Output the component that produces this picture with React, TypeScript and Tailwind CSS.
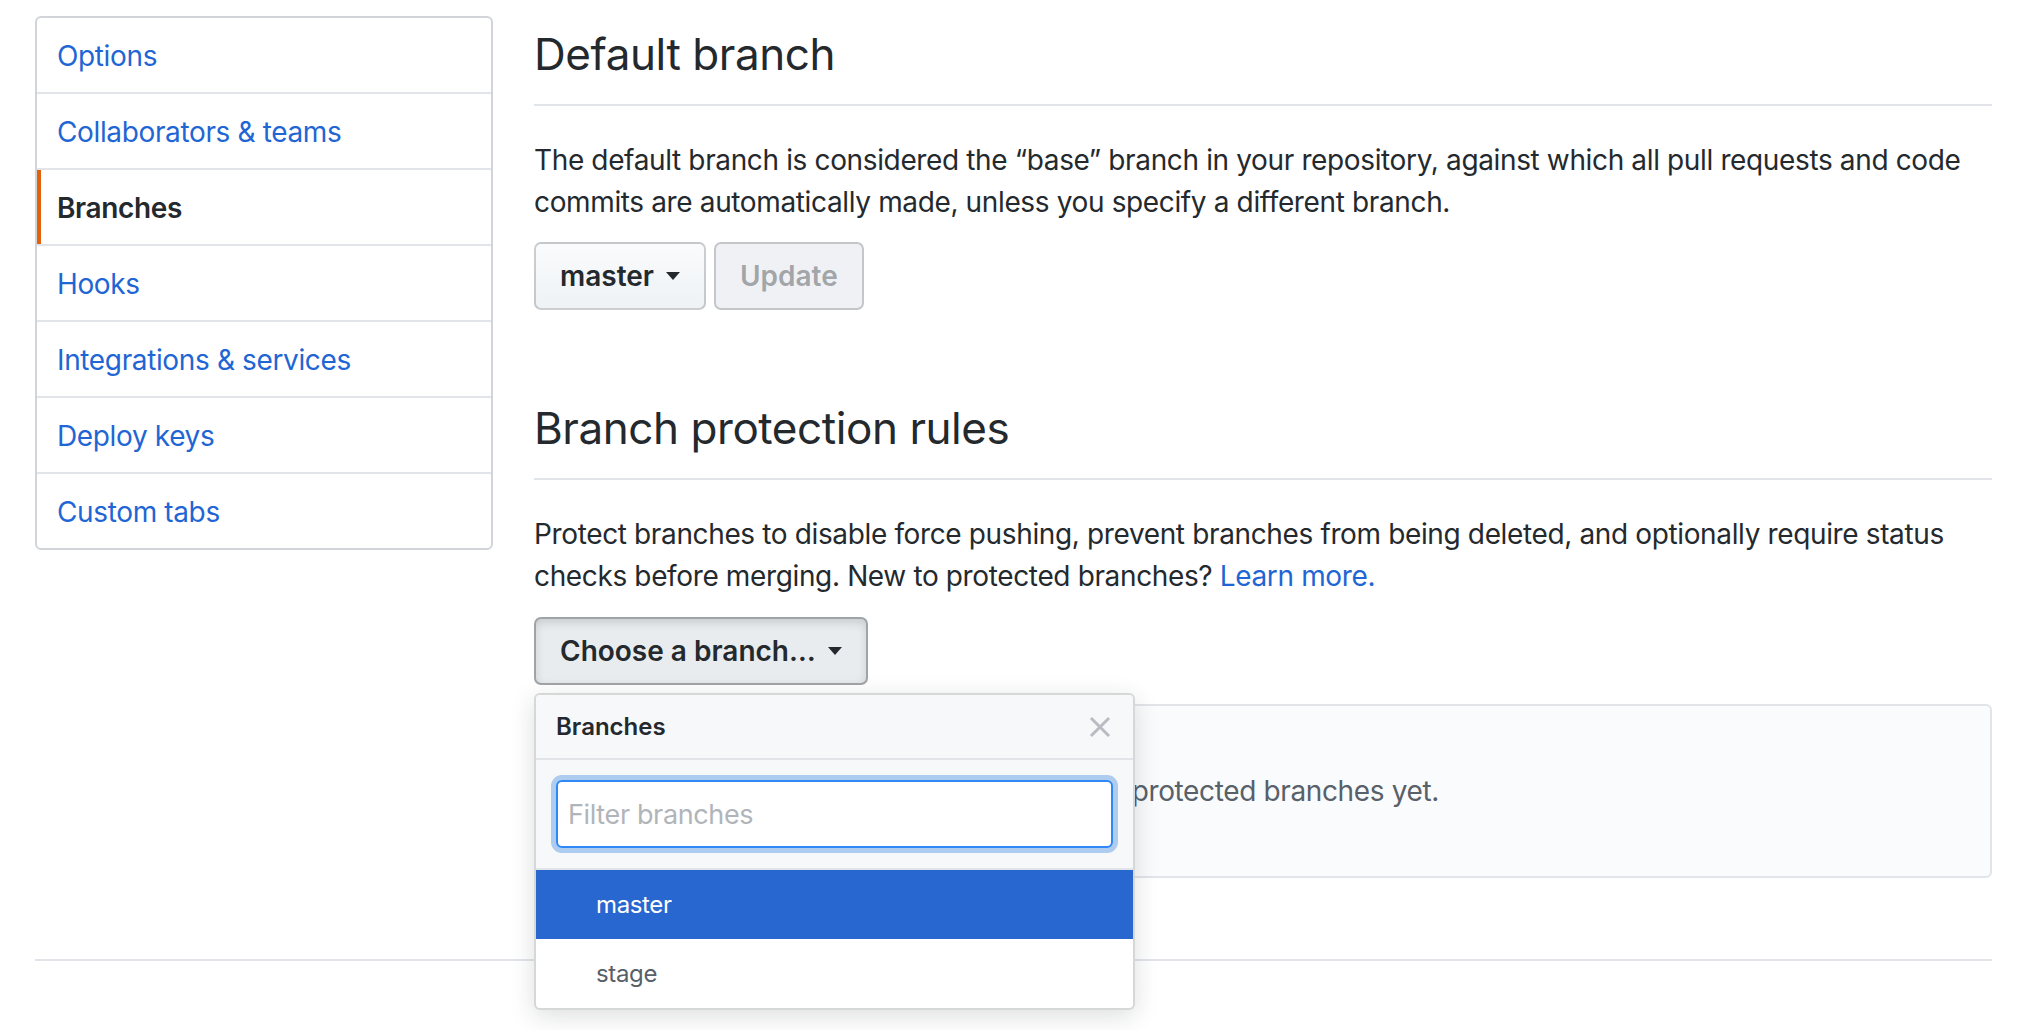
import React from "react";

const items = [
  "Options",
  "Collaborators & teams",
  "Branches",
  "Hooks",
  "Integrations & services",
  "Deploy keys",
  "Custom tabs",
];

function Caret({ color = "#24292e" }: { color?: string }) {
  return (
    <span
      className="inline-block w-0 h-0 border-x-[7px] border-x-transparent border-t-[8px] align-middle"
      style={{ borderTopColor: color }}
    />
  );
}

export default function App() {
  return (
    <div className="w-[2040px] min-h-[1030px] bg-white pt-4 pl-[35px] font-['Inter','Liberation_Sans',sans-serif] text-[28px] leading-[42px] text-[#24292e] tracking-[-0.013em]">
      <div className="flex items-start gap-[41px]">
        <nav className="w-[458px] border-2 border-[#d1d5da] rounded-[6px] overflow-hidden">
          {items.map((it, i) => {
            const sel = it === "Branches";
            return (
              <div
                key={it}
                className={
                  "relative px-5 pt-[17px] pb-[15px] " +
                  (i > 0 ? "border-t-2 border-[#e1e4e8] " : "") +
                  (sel ? "font-semibold text-[#24292e]" : "text-[#1f66d4]")
                }
              >
                {sel && <span className="absolute left-0 top-0 bottom-0 w-1 bg-[#e36209]" />}
                {it}
              </div>
            );
          })}
        </nav>

        <main className="w-[1458px]">
          <div className="border-b-2 border-[#e1e4e8] pb-[14px] mb-[33px]">
            <h2 className="pt-[2px] text-[44px] leading-[72px] font-normal tracking-[-0.01em]">Default branch</h2>
          </div>
          <p className="mb-[19px]">
            The default branch is considered the “base” branch in your repository, against which all pull
            requests and code commits are automatically made, unless you specify a different branch.
          </p>
          <div className="flex gap-2">
            <button className="h-[68px] px-6 flex items-center gap-3 font-semibold tracking-normal border-2 border-[rgba(27,31,35,0.2)] rounded-[7px] bg-[linear-gradient(-180deg,#fafbfc_0%,#eff3f6_90%)] text-[#24292e]">
              master
              <Caret />
            </button>
            <button className="h-[68px] px-[24px] flex items-center font-semibold tracking-normal border-2 border-[rgba(27,31,35,0.2)] rounded-[7px] bg-[#eff1f4] text-[rgba(36,41,46,0.4)]">
              Update
            </button>
          </div>

          <div className="mt-20 border-b-2 border-[#e1e4e8] pb-[14px] mb-[33px]">
            <h2 className="pt-[2px] text-[44px] leading-[72px] font-normal tracking-[-0.01em]">Branch protection rules</h2>
          </div>
          <p className="mb-5">
            Protect branches to disable force pushing, prevent branches from being deleted, and optionally
            require status checks before merging. New to protected branches?{" "}
            <a className="text-[#1f66d4]">Learn more.</a>
          </p>

          <div className="relative">
            <button className="h-[68px] px-6 flex items-center gap-3 font-semibold tracking-normal border-2 border-[rgba(27,31,35,0.35)] rounded-[7px] bg-[#e9ecef] shadow-[inset_0_4px_8px_rgba(27,31,35,0.15)] text-[#24292e]">
              Choose a branch…
              <Caret />
            </button>

            <div className="absolute left-0 top-[76px] z-10 w-[601px] bg-white border-2 border-[rgba(27,31,35,0.18)] rounded-[6px] shadow-[0_6px_24px_rgba(27,31,35,0.15)] overflow-hidden">
              <div className="h-[65px] px-5 flex items-center justify-between bg-[#f6f8fa] border-b-2 border-[#e1e4e8]">
                <span className="text-[24px] font-semibold tracking-normal text-[#24292e]">Branches</span>
                <svg width="22" height="22" viewBox="0 0 22 22" className="mr-[2px]">
                  <path d="M3 3 L19 19 M19 3 L3 19" stroke="#b9bdc3" strokeWidth="3" strokeLinecap="square" />
                </svg>
              </div>
              <div className="p-5 bg-[#f6f8fa] border-b-2 border-[#e1e4e8]">
                <input
                  placeholder="Filter branches"
                  className="block w-full h-[68px] px-[10px] text-[27px] bg-white border-2 border-[#2f88f5] rounded-[6px] shadow-[0_0_0_5px_rgba(3,102,214,0.3)] outline-none placeholder:text-[#b1b5ba]"
                />
              </div>
              <div className="h-[69px] pl-[60px] flex items-center bg-[#2867cf] text-white text-[24px]">master</div>
              <div className="h-[69px] pl-[60px] flex items-center text-[#586069] text-[24px]">stage</div>
            </div>
          </div>

          <div className="mt-[19px] border-2 border-[#e1e4e8] rounded-[6px] bg-[#fafbfc] py-[64px] text-center text-[#586069]">
            No protected branches yet.
          </div>
        </main>
      </div>
      <div className="mt-[81px] w-[1957px] border-t-2 border-[#e1e4e8]" />
    </div>
  );
}
